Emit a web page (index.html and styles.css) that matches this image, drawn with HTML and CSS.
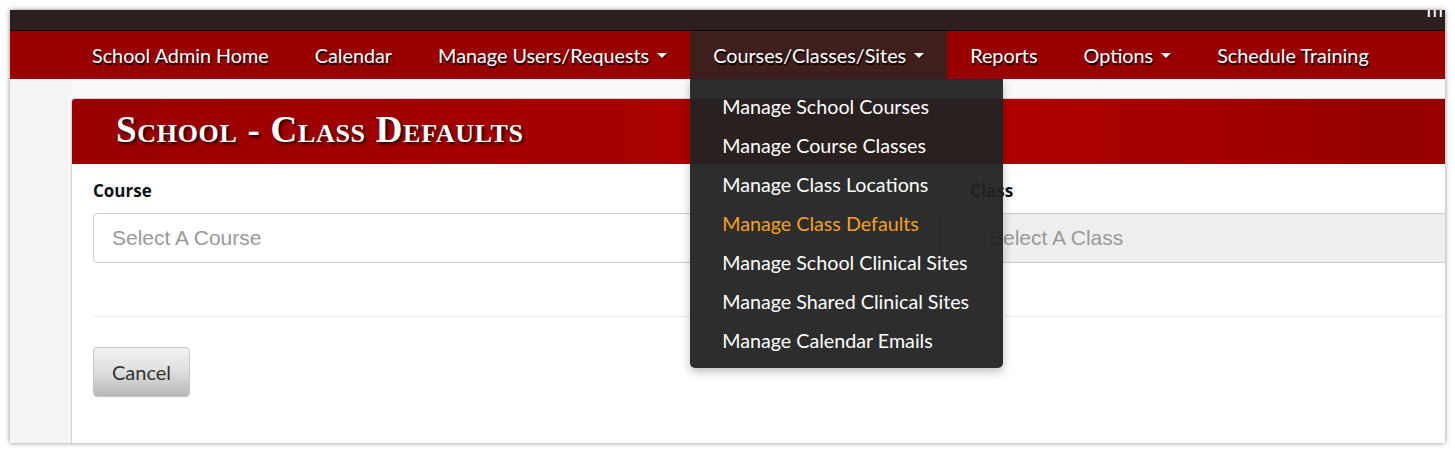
FILE: index.html
```html
<!DOCTYPE html>
<html>
<head>
<meta charset="utf-8">
<link rel="stylesheet" href="styles.css">
</head>
<body>
<div class="window">
  <div class="topbar"><span class="user">m</span></div>
  <nav class="navbar">
    <a class="nav-item">School Admin Home</a>
    <a class="nav-item">Calendar</a>
    <a class="nav-item">Manage Users/Requests <span class="caret"></span></a>
    <div class="nav-item active">Courses/Classes/Sites <span class="caret"></span>
      <ul class="dropdown">
        <li>Manage School Courses</li>
        <li>Manage Course Classes</li>
        <li>Manage Class Locations</li>
        <li class="current">Manage Class Defaults</li>
        <li>Manage School Clinical Sites</li>
        <li>Manage Shared Clinical Sites</li>
        <li>Manage Calendar Emails</li>
      </ul>
    </div>
    <a class="nav-item">Reports</a>
    <a class="nav-item">Options <span class="caret"></span></a>
    <a class="nav-item">Schedule Training</a>
  </nav>
  <main class="page">
    <section class="panel">
      <h1 class="panel-heading">School - Class Defaults</h1>
      <div class="panel-body">
        <div class="fields">
          <div class="field">
            <label class="label">Course</label>
            <div class="select">Select A Course</div>
          </div>
          <div class="field">
            <label class="label">Class</label>
            <div class="select disabled">Select A Class</div>
          </div>
        </div>
        <hr class="divider">
        <button class="btn">Cancel</button>
      </div>
    </section>
  </main>
</div>
</body>
</html>
```

FILE: styles.css
```css
* { box-sizing: border-box; }
html, body { margin: 0; padding: 0; background: #ffffff; }
body { font-family: "Lato", "Open Sans", sans-serif; }

.window {
  margin: 10px;
  width: 1435px;
  height: 433px;
  overflow: hidden;
  position: relative;
  background: #f6f6f6;
  box-shadow: 0 0 5px rgba(0, 0, 0, 0.45);
}

.topbar {
  height: 21px;
  background: #2d1f1f;
  border-bottom: 1px solid #0e0808;
  position: relative;
  overflow: hidden;
}
.user {
  position: absolute;
  right: 2px;
  top: -13px;
  color: #fff;
  font-size: 20px;
  font-family: "Lato", sans-serif;
}

.navbar {
  height: 48px;
  background: #990000;
  display: flex;
  padding-left: 59px;
  position: relative;
  z-index: 5;
}
.nav-item {
  display: flex;
  align-items: center;
  padding: 0 23px;
  color: #fff;
  font-size: 19.8px;
  text-shadow: 1px 2px 1px #000;
  white-space: nowrap;
  position: relative;
}
.nav-item.active { background: #3f1f1e; }
.caret {
  display: inline-block;
  width: 0;
  height: 0;
  margin-left: 8px;
  border-left: 5px solid transparent;
  border-right: 5px solid transparent;
  border-top: 5px solid #fff;
  filter: drop-shadow(1px 1px 0 rgba(0,0,0,0.6));
}

.dropdown {
  position: absolute;
  top: 100%;
  left: 0;
  width: 313px;
  margin: 0;
  padding: 8px 0;
  list-style: none;
  background: rgba(34, 34, 34, 0.95);
  border-radius: 0 0 5px 5px;
  box-shadow: 0 4px 10px rgba(0, 0, 0, 0.25);
}
.dropdown li {
  padding-left: 32px;
  line-height: 39px;
  font-size: 19.7px;
  color: #fff;
  text-shadow: none;
}
.dropdown li.current { color: #f5a024; }

.page {
  padding: 19px 0 0 61px;
  background: linear-gradient(to right, #f5f5f5 61px, #f9f9f9 61px);
}

.panel {
  width: 1420px;
  background: #fff;
  border: 1px solid #d4d4d4;
  border-radius: 4px 4px 0 0;
  height: 400px;
}
.panel-heading {
  margin: 0;
  height: 65px;
  padding-left: 44px;
  padding-bottom: 5px;
  display: flex;
  align-items: center;
  color: #fff;
  font-family: "Liberation Serif", "Times New Roman", serif;
  font-variant: small-caps;
  font-weight: bold;
  font-size: 37px;
  letter-spacing: 0.7px;
  text-shadow: 2px 2px 3px rgba(0, 0, 0, 0.85);
  border-radius: 3px 3px 0 0;
  background: linear-gradient(to right, #990000 0%, #a50000 30%, #b20000 62%, #a40000 80%, #960000 92%, #990000 100%);
}

.panel-body {
  padding: 16px 21px 0 21px;
}
.fields {
  display: grid;
  grid-template-columns: 847px 1fr;
  column-gap: 30px;
}
.label {
  display: block;
  font-family: "Open Sans", sans-serif;
  font-weight: bold;
  font-size: 17px;
  line-height: 22px;
  color: #111;
  margin-bottom: 11px;
}
.select {
  height: 50px;
  border: 1px solid #cccccc;
  border-radius: 4px;
  padding-left: 18px;
  display: flex;
  align-items: center;
  font-family: "Liberation Sans", Arial, sans-serif;
  font-size: 21px;
  color: #999999;
  background: #fff;
}
.select.disabled { background: #eeeeee; }

.divider {
  border: 0;
  border-top: 1px solid #eeeeee;
  margin: 53px 0 30px 0;
}

.btn {
  width: 97px;
  height: 50px;
  font-family: "Lato", "Open Sans", sans-serif;
  font-size: 20px;
  color: #333;
  border: 1px solid #c6c6c6;
  border-radius: 4px;
  background: linear-gradient(to bottom, #f2f2f2 0%, #dedede 50%, #b8b8b8 100%);
  padding: 0;
}
```
